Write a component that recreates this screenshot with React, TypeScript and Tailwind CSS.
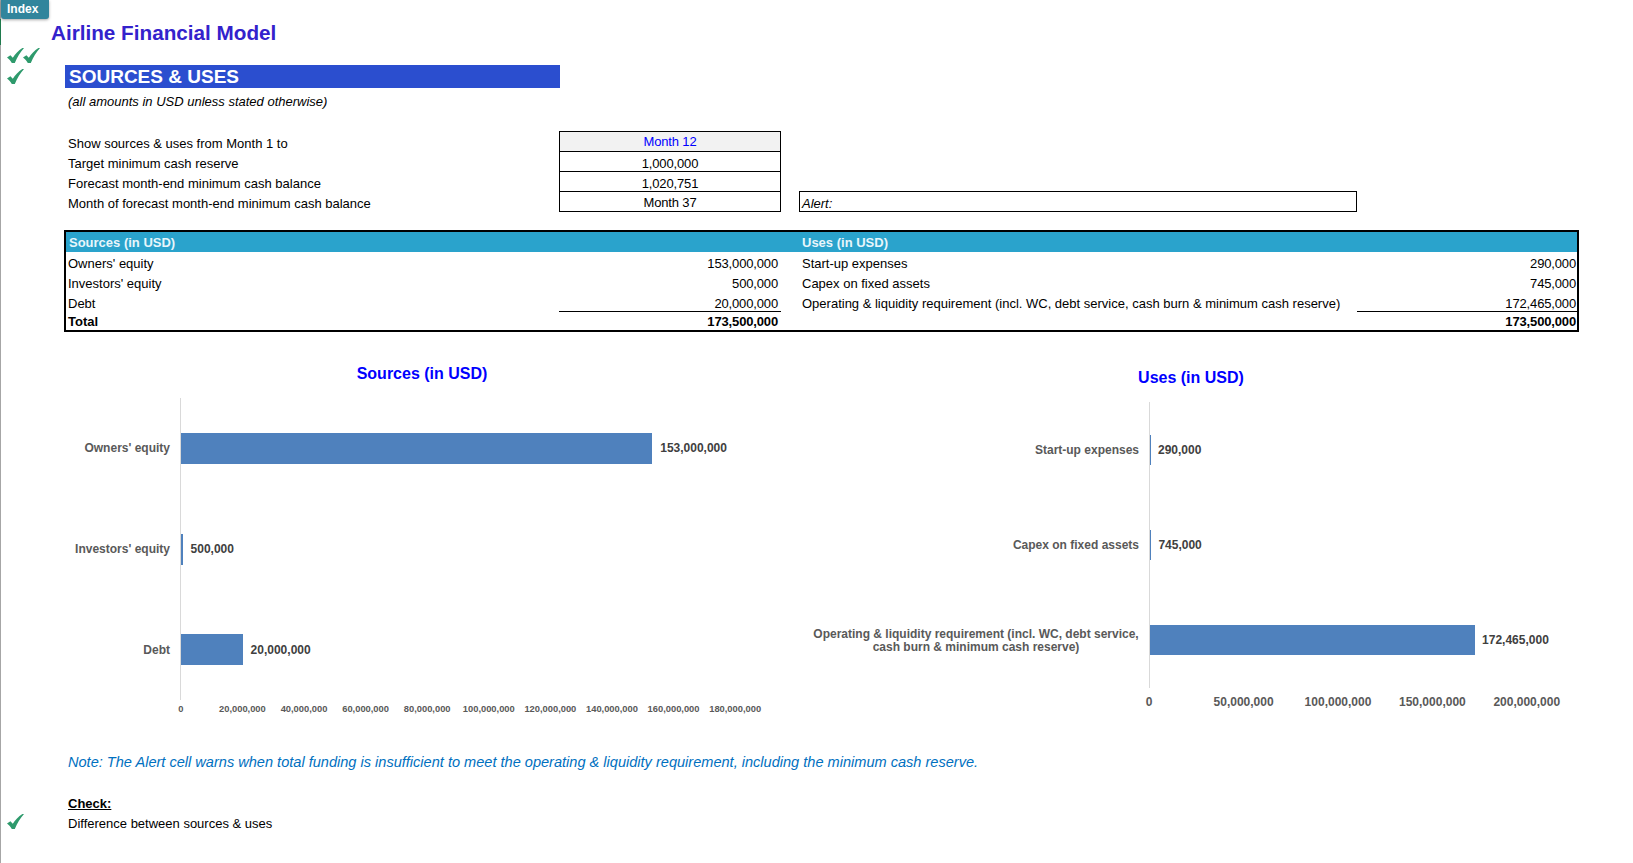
const font = { fontFamily: '"Liberation Sans", Arial, sans-serif' };

const inputRows = [
  { label: 'Show sources & uses from Month 1 to', value: 'Month 12', height: 'h-[21px]', labelPad: 'pt-[6px]', valuePad: 'pt-[3px]', highlight: true },
  { label: 'Target minimum cash reserve', value: '1,000,000', height: 'h-[20px]', labelPad: 'pt-[5px]', valuePad: 'pt-[5px]' },
  { label: 'Forecast month-end minimum cash balance', value: '1,020,751', height: 'h-[20px]', labelPad: 'pt-[5px]', valuePad: 'pt-[5px]' },
  { label: 'Month of forecast month-end minimum cash balance', value: 'Month 37', height: 'h-[20px]', labelPad: 'pt-[5px]', valuePad: 'pt-[4px]', alert: true },
];

const tableRows = [
  { source: "Owners' equity", sourceValue: '153,000,000', use: 'Start-up expenses', useValue: '290,000' },
  { source: "Investors' equity", sourceValue: '500,000', use: 'Capex on fixed assets', useValue: '745,000' },
  {
    source: 'Debt',
    sourceValue: '20,000,000',
    use: 'Operating & liquidity requirement (incl. WC, debt service, cash burn & minimum cash reserve)',
    useValue: '172,465,000',
    underline: true,
  },
];

const sourceBars = [
  { label: "Owners' equity", value: 153000000, text: '153,000,000' },
  { label: "Investors' equity", value: 500000, text: '500,000' },
  { label: 'Debt', value: 20000000, text: '20,000,000' },
];

const useBars = [
  { label: 'Start-up expenses', value: 290000, text: '290,000' },
  { label: 'Capex on fixed assets', value: 745000, text: '745,000' },
  { label: 'Operating & liquidity requirement (incl. WC, debt service, cash burn & minimum cash reserve)', value: 172465000, text: '172,465,000' },
];

const sourceTicks = ['0', '20,000,000', '40,000,000', '60,000,000', '80,000,000', '100,000,000', '120,000,000', '140,000,000', '160,000,000', '180,000,000'];
const useTicks = ['0', '50,000,000', '100,000,000', '150,000,000', '200,000,000'];

function Check({ className = '' }: { className?: string }) {
  return (
    <svg viewBox="0 0 17 15" className={`w-[17px] h-[15px] shrink-0 ${className}`}>
      <path d="M0 9.5 L3.4 7.2 L5.8 9.8 C8.2 6 11.4 2.6 15.4 0 L17 0 C13.4 4 10.2 9 7.8 15 L4.8 15 C3.8 12.8 2 11 0 9.5 Z" fill="#2e9a6c" />
    </svg>
  );
}

export default function App() {
  return (
    <div className="w-[1633px] h-[863px] bg-white overflow-hidden flex text-black relative" style={font}>
      <div className="w-[1px] flex flex-col shrink-0">
        <div className="h-[19px] bg-[#a6a6a6]" />
        <div className="h-[26px] bg-[#1f7a4d]" />
        <div className="flex-1 bg-[#a6a6a6]" />
      </div>

      <div className="flex-1 flex flex-col min-w-0">
        <div className="h-[19px] w-[48px] bg-[#31859c] rounded-b-[3px] shadow-[0_1px_3px_rgba(0,0,0,0.35)] text-white text-[12px] font-bold leading-[18px] pl-[6px]">
          Index
        </div>

        <div className="h-[27px] pt-[2px] pl-[50px] flex items-center text-[20.7px] font-bold text-[#3322cc] leading-none">
          Airline Financial Model
        </div>

        <div className="h-[19px] pl-[6px] flex items-center">
          <Check />
          <Check className="-ml-[1px]" />
        </div>

        <div className="h-[23px] flex items-center">
          <div className="w-[64px] pl-[6px]">
            <Check />
          </div>
          <div className="w-[495px] h-full bg-[#2b4ecf] text-white text-[19px] font-bold leading-[23px] pl-[4px]">
            SOURCES &amp; USES
          </div>
        </div>

        <div className="h-[20px] mt-[4px] pl-[67px] italic text-[13px] leading-[20px]">
          (all amounts in USD unless stated otherwise)
        </div>

        <div className="mt-[19px] flex flex-col text-[13px]">
          {inputRows.map((r, i) => (
            <div key={r.label} className={`flex leading-[14px] ${r.height}`}>
              <div className={`w-[558px] pl-[67px] whitespace-nowrap ${r.labelPad}`}>{r.label}</div>
              <div
                className={`w-[222px] border border-black text-center tracking-[-0.15px] ${r.valuePad} ${i > 0 ? 'border-t-0' : ''} ${r.highlight ? 'bg-[#f2f2f2] text-[#0000ff]' : ''}`}
              >
                {r.value}
              </div>
              {r.alert && (
                <div className="-mt-[1px] ml-[18px] w-[558px] border border-black italic pl-[2px] pt-[5px]">Alert:</div>
              )}
            </div>
          ))}
        </div>

        <div className="mt-[18px] ml-[63px] w-[1515px] border-2 border-black text-[13px] leading-[24px]">
          <div className="grid grid-cols-[715px_19px_777px] grid-rows-[20px] h-[20px] bg-[#2aa3cc] text-[#e8f6fb] font-bold leading-[22px]">
            <div className="pl-[3px]">Sources (in USD)</div>
            <div />
            <div className="pl-[2px]">Uses (in USD)</div>
          </div>
          {tableRows.map(r => (
            <div key={r.source} className="grid grid-cols-[493px_222px_19px_557px_220px] grid-rows-[20px] h-[20px]">
              <div className="pl-[2px]">{r.source}</div>
              <div className={`text-right pr-[3px] tracking-[-0.15px] ${r.underline ? 'border-b border-black' : ''}`}>{r.sourceValue}</div>
              <div />
              <div className="pl-[2px] whitespace-nowrap">{r.use}</div>
              <div className={`text-right pr-[1px] tracking-[-0.15px] ${r.underline ? 'border-b border-black' : ''}`}>{r.useValue}</div>
            </div>
          ))}
          <div className="grid grid-cols-[493px_222px_19px_557px_220px] grid-rows-[18px] h-[18px] font-bold leading-[20px]">
            <div className="pl-[2px]">Total</div>
            <div className="text-right pr-[3px] tracking-[-0.15px]">173,500,000</div>
            <div />
            <div />
            <div className="text-right pr-[1px] tracking-[-0.15px]">173,500,000</div>
          </div>
        </div>

        <div className="mt-[22px] h-[366px] flex">
          <div className="w-[799px] shrink-0 flex flex-col">
            <div className="h-[40px] ml-[40px] w-[762px] flex items-center justify-center text-[16px] font-bold text-[#0000ff]">
              Sources (in USD)
            </div>
            <div className="mt-[4px] h-[302px] flex">
              <div className="w-[179px] flex flex-col">
                {sourceBars.map(b => (
                  <div key={b.label} className="flex-1 flex items-center justify-end pr-[10px] text-[12px] font-bold text-[#595959]">
                    {b.label}
                  </div>
                ))}
              </div>
              <div className="flex-1 flex flex-col border-l border-[#d9d9d9]">
                {sourceBars.map(b => (
                  <div key={b.label} className="flex-1 flex items-center gap-[8px]">
                    <div className="h-[31px] bg-[#4f81bd]" style={{ width: Math.max(1, b.value * 0.00000308) }} />
                    <div className="text-[12px] font-bold text-[#404040]">{b.text}</div>
                  </div>
                ))}
              </div>
            </div>
            <div className="h-[20px] ml-[149px] flex items-center text-[9.33px] font-bold text-[#595959]">
              {sourceTicks.map(t => (
                <div key={t} className="w-[61.6px] text-center whitespace-nowrap">{t}</div>
              ))}
            </div>
          </div>

          <div className="flex-1 flex flex-col">
            <div className="mt-[4px] h-[40px] ml-[-4px] w-[790px] flex items-center justify-center text-[16px] font-bold text-[#0000ff]">
              Uses (in USD)
            </div>
            <div className="mt-[4px] h-[286px] flex">
              <div className="w-[349px] flex flex-col">
                {useBars.map(b => (
                  <div key={b.label} className="flex-1 flex items-center justify-end pr-[10px] pt-[2px] text-[12px] leading-[13px] font-bold text-[#595959]">
                    <div className="max-w-[326px] text-center">{b.label}</div>
                  </div>
                ))}
              </div>
              <div className="flex-1 flex flex-col border-l border-[#d9d9d9]">
                {useBars.map(b => (
                  <div key={b.label} className="flex-1 flex items-center gap-[7px]">
                    <div className="h-[30px] bg-[#4f81bd]" style={{ width: Math.max(1, b.value * 0.000001885) }} />
                    <div className="text-[12px] font-bold text-[#404040]">{b.text}</div>
                  </div>
                ))}
              </div>
            </div>
            <div className="h-[20px] mt-[4px] ml-[302px] flex items-center text-[12px] font-bold text-[#595959]">
              {useTicks.map(t => (
                <div key={t} className="w-[94.4px] text-center whitespace-nowrap">{t}</div>
              ))}
            </div>
          </div>
        </div>

        <div className="mt-[32px] h-[20px] pl-[67px] italic text-[14.57px] leading-[20px] text-[#0070c0]">
          Note: The Alert cell warns when total funding is insufficient to meet the operating &amp; liquidity requirement, including the minimum cash reserve.
        </div>

        <div className="mt-[22px] h-[20px] pl-[67px] text-[13px] font-bold underline leading-[20px]">Check:</div>
        <div className="h-[20px] flex items-center text-[13px]">
          <div className="w-[67px] pl-[6px] self-start">
            <Check />
          </div>
          <div>Difference between sources &amp; uses</div>
        </div>
      </div>
    </div>
  );
}
